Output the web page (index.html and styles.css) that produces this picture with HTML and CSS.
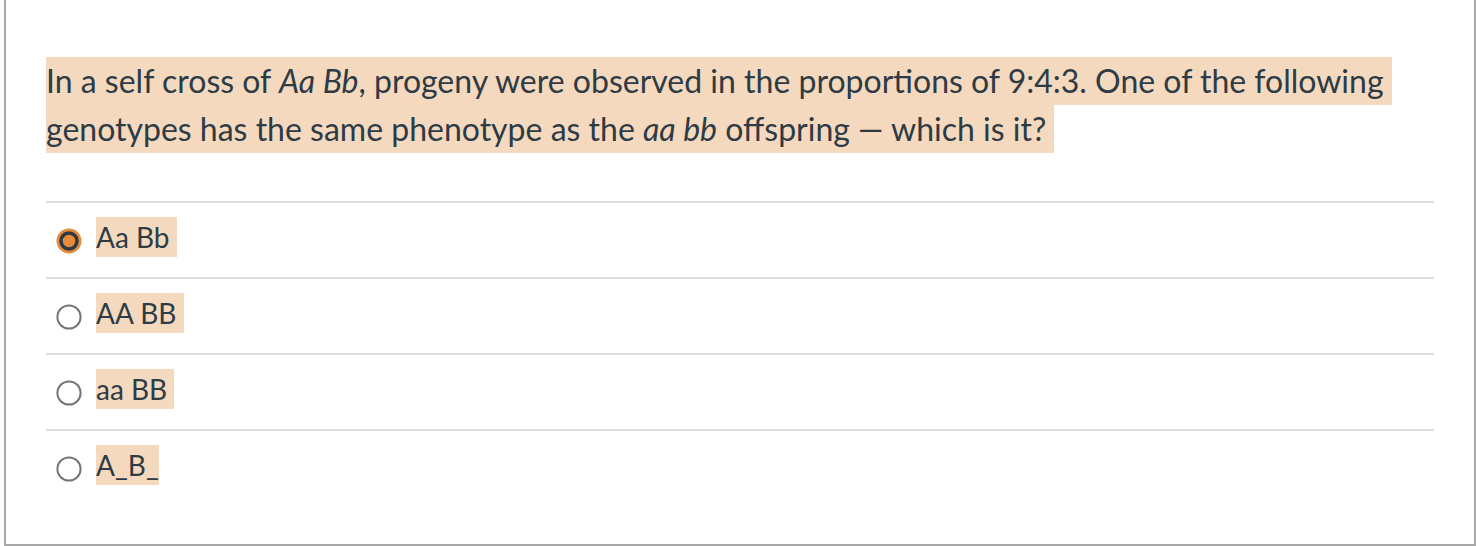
FILE: index.html
```html
<!DOCTYPE html>
<html lang="en">
<head>
<meta charset="utf-8">
<title>Quiz question</title>
<link rel="stylesheet" href="styles.css">
</head>
<body>
<div class="page">
  <div class="question">
    <p class="question-text"><span class="hl hl-q">In a self cross of <em>Aa Bb</em>, progeny were observed in the proportions of 9:4:3. One of the following genotypes has the same phenotype as the <em>aa bb</em> offspring — which is it?</span></p>
  </div>
  <ul class="answers">
    <li class="answer">
      <span class="radio">
        <svg width="26" height="26" viewBox="0 0 26 26"><circle cx="13" cy="13" r="12.5" fill="#e8893a"/><circle cx="13" cy="13" r="12" fill="#ea8b3c"/><circle cx="13" cy="13" r="8" fill="#ea8b3c" stroke="#2d3b45" stroke-width="3.6"/></svg>
      </span>
      <span class="hl hl-a">Aa Bb&nbsp;</span>
    </li>
    <li class="answer">
      <span class="radio">
        <svg width="26" height="26" viewBox="0 0 26 26"><circle cx="13" cy="13" r="11.6" fill="#fff" stroke="#757575" stroke-width="2"/></svg>
      </span>
      <span class="hl hl-a">AA BB&nbsp;</span>
    </li>
    <li class="answer">
      <span class="radio">
        <svg width="26" height="26" viewBox="0 0 26 26"><circle cx="13" cy="13" r="11.6" fill="#fff" stroke="#757575" stroke-width="2"/></svg>
      </span>
      <span class="hl hl-a">aa BB&nbsp;</span>
    </li>
    <li class="answer">
      <span class="radio">
        <svg width="26" height="26" viewBox="0 0 26 26"><circle cx="13" cy="13" r="11.6" fill="#fff" stroke="#757575" stroke-width="2"/></svg>
      </span>
      <span class="hl hl-a">A_B_</span>
    </li>
  </ul>
</div>
</body>
</html>
```
FILE: styles.css
```css
html, body {
  margin: 0;
  padding: 0;
  background: #fff;
}
body {
  font-family: Lato, "Noto Sans", sans-serif;
  color: #2d3b45;
}
.page {
  margin-left: 4px;
  width: 1472px;
  height: 546px;
  border: 2px solid #a8a8a8;
  border-top: none;
  padding: 0 40px;
  box-sizing: border-box;
}
.question {
  padding-top: 57px;
}
.question-text {
  margin: 0;
  font-size: 32px;
  line-height: 48px;
}
.hl {
  background: #f5d9bf;
  -webkit-box-decoration-break: clone;
  box-decoration-break: clone;
}
.hl-q {
  padding: 4px 8px 5px 0;
}
.question-text em {
  font-style: italic;
}
.answers {
  list-style: none;
  margin: 48px 0 0;
  padding: 0;
}
.answer {
  display: flex;
  align-items: center;
  height: 76px;
  box-sizing: border-box;
  border-top: 2px solid #dcdcdc;
  padding-left: 10px;
}
.radio {
  display: flex;
  width: 26px;
  height: 26px;
  margin-right: 14px;
  margin-top: 2px;
}
.hl-a {
  font-size: 28px;
  line-height: 34px;
  padding: 3px 0;
  margin-bottom: 6px;
}
```
